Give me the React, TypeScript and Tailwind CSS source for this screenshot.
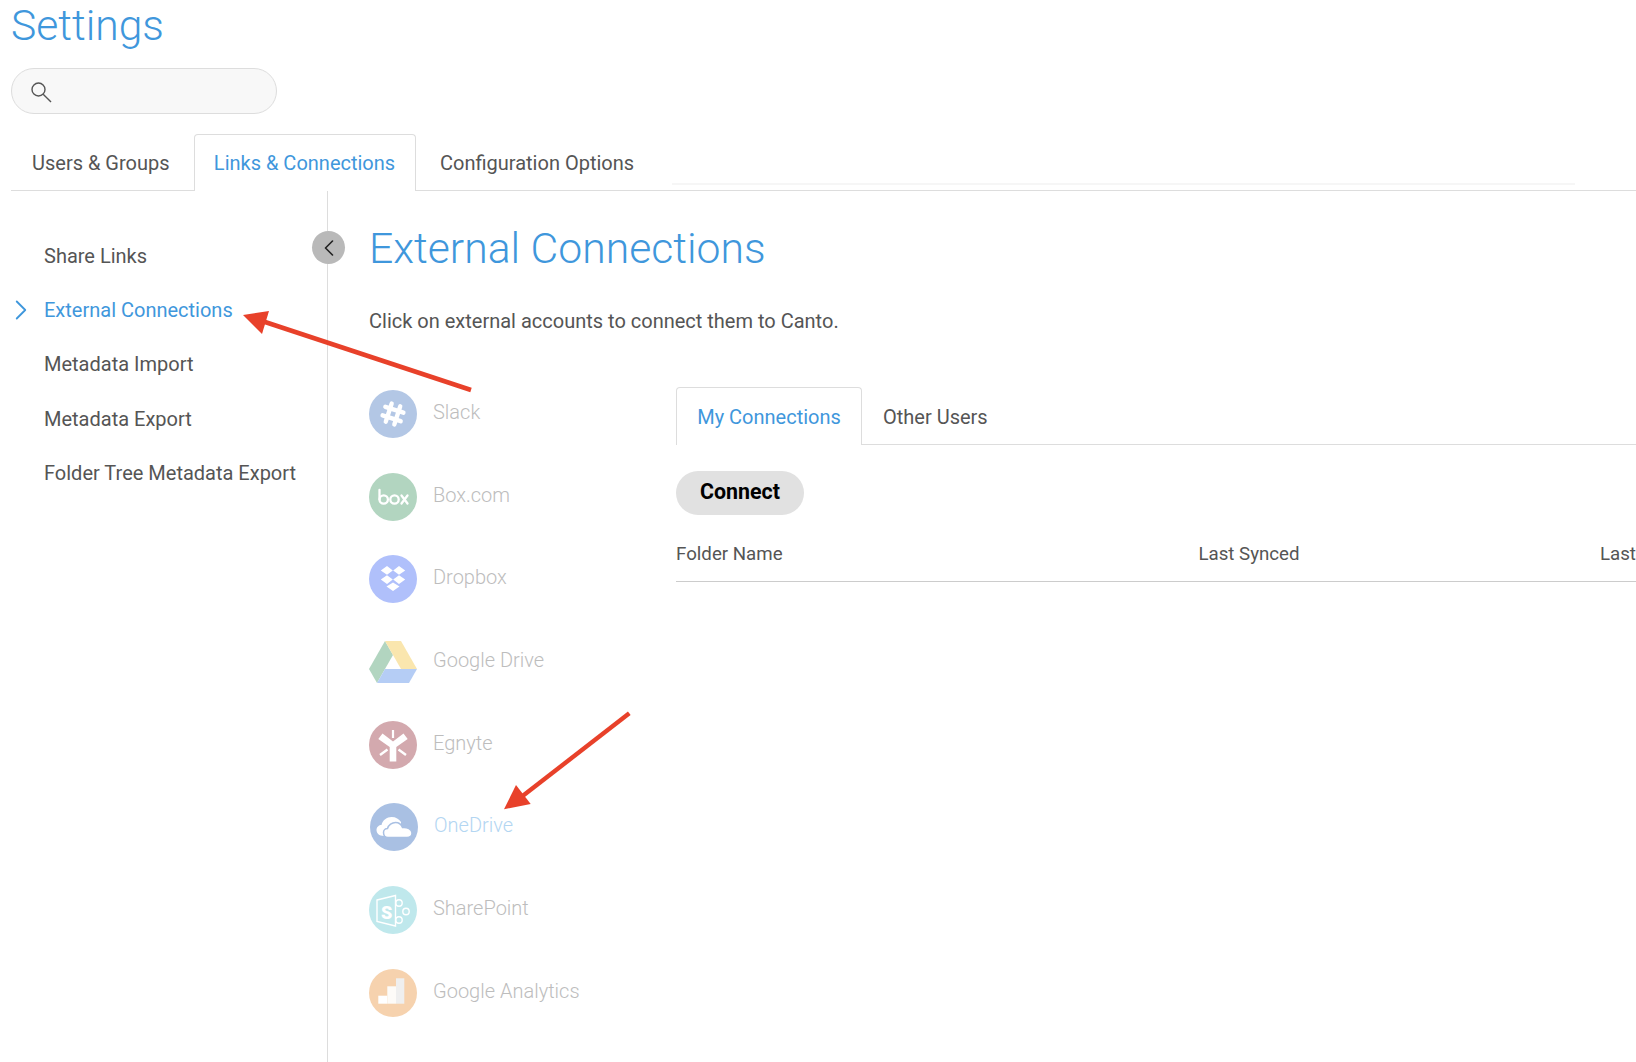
import { ChevronLeft, ChevronRight } from "lucide-react";

const sideLinks = [
  { label: "Share Links" },
  { label: "External Connections", active: true },
  { label: "Metadata Import" },
  { label: "Metadata Export" },
  { label: "Folder Tree Metadata Export" },
];

function SlackIcon() {
  return (
    <svg viewBox="0 0 48 48" className="size-12">
      <circle cx="24" cy="24" r="24" fill="#b3c7e5" />
      <g stroke="#fff" strokeWidth="4.4" strokeLinecap="round" fill="none" transform="rotate(18 24 24)">
        <path d="M19.5 14.5 V33.5" />
        <path d="M28.5 14.5 V33.5" />
        <path d="M14.5 19.5 H33.5" />
        <path d="M14.5 28.5 H33.5" />
      </g>
    </svg>
  );
}

function BoxIcon() {
  return (
    <svg viewBox="0 0 48 48" className="size-12">
      <circle cx="24" cy="24" r="24" fill="#b2d5c0" />
      <g stroke="#fff" strokeWidth="2.3" fill="none" strokeLinecap="round">
        <path d="M10.5 17 V26.5" />
        <circle cx="14.7" cy="26.5" r="4.2" />
        <circle cx="25.5" cy="26.5" r="4.2" />
        <path d="M32.5 22.5 L38.5 30.5 M38.5 22.5 L32.5 30.5" />
      </g>
    </svg>
  );
}

function DropboxIcon() {
  return (
    <svg viewBox="0 0 48 48" className="size-12">
      <circle cx="24" cy="24" r="24" fill="#b0c0fb" />
      <path
        fill="#fff"
        d="M18 11 L23.8 15.4 L18 19.8 L11.8 15.4 Z M30 11 L36.2 15.4 L30 19.8 L24.2 15.4 Z M18 20.2 L23.8 24.6 L18 29 L11.8 24.6 Z M30 20.2 L36.2 24.6 L30 29 L24.2 24.6 Z M24 27.5 L30.5 31.5 L24 36 L17.5 31.5 Z"
      />
    </svg>
  );
}

function DriveIcon() {
  return (
    <svg viewBox="0 0 48 42" className="h-[42px] w-12">
      <path fill="#b2d5c0" d="M16 0 L0 28 L8 42 L24 14 Z" />
      <path fill="#fae6ae" d="M16 0 L32 0 L48 28 L32 28 Z" />
      <path fill="#b5cdf5" d="M16 28 L48 28 L40 42 L8 42 Z" />
    </svg>
  );
}

function EgnyteIcon() {
  return (
    <svg viewBox="0 0 48 48" className="size-12">
      <circle cx="24" cy="24" r="24" fill="#d3a9ae" />
      <path d="M24 9 V17" stroke="#fff" strokeWidth="2.2" />
      <path d="M11 34 L18.5 28.5 M37 34 L29.5 28.5" stroke="#fff" strokeWidth="2.4" />
      <path fill="#fff" d="M9.3 18 L13.5 12.5 L24 20.5 L34.5 12.5 L38.7 18 L27.3 26 V40.5 H20.7 V26 Z" />
    </svg>
  );
}

function OneDriveIcon() {
  return (
    <svg viewBox="0 0 48 48" className="size-12">
      <circle cx="24" cy="24" r="24" fill="#a9c0e3" />
      <path
        fill="#fff"
        d="M14 33 C9 33 6.5 30 6.5 27 C6.5 24 9 22 11.5 22 C12.5 17 17 14 21.5 14 C26 14 29 16 31 19 L31 26 L14 33 Z"
      />
      <path
        fill="#fff"
        stroke="#a9c0e3"
        strokeWidth="1.5"
        d="M18 34.5 C15 34.5 13.5 32 13.5 29.5 C13.5 27 15.5 25.5 17.5 25.5 C18.5 22 22 19.5 25.5 19.5 C29 19.5 31.5 22 32.5 24.5 C37 24 42 26 42 30 C42 33 39.5 34.5 37 34.5 Z"
      />
    </svg>
  );
}

function SharePointIcon() {
  return (
    <svg viewBox="0 0 48 48" className="size-12">
      <circle cx="24" cy="24" r="24" fill="#bfe8ec" />
      <g fill="none" stroke="#fff" strokeWidth="1.4">
        <circle cx="30" cy="17" r="3.2" />
        <circle cx="37" cy="25.5" r="3.2" />
        <circle cx="30" cy="34" r="3.2" />
        <path d="M8 14 L26.5 9.5 V40 L8 35.5 Z" />
      </g>
      <text x="12" y="33" fill="#fff" fontSize="18" fontWeight="900" fontFamily="Roboto, sans-serif">
        S
      </text>
    </svg>
  );
}

function AnalyticsIcon() {
  return (
    <svg viewBox="0 0 48 48" className="size-12">
      <circle cx="24" cy="24" r="24" fill="#f6d2ae" />
      <rect x="9.3" y="26.7" width="9" height="8" fill="#fff" />
      <rect x="18.3" y="17.3" width="8.7" height="17.4" fill="#fdfbf8" />
      <rect x="27" y="9.3" width="8.3" height="25.4" fill="#efefef" />
    </svg>
  );
}

const services = [
  { name: "Slack", icon: <SlackIcon /> },
  { name: "Box.com", icon: <BoxIcon /> },
  { name: "Dropbox", icon: <DropboxIcon /> },
  { name: "Google Drive", icon: <DriveIcon /> },
  { name: "Egnyte", icon: <EgnyteIcon /> },
  { name: "OneDrive", icon: <OneDriveIcon />, active: true },
  { name: "SharePoint", icon: <SharePointIcon /> },
  { name: "Google Analytics", icon: <AnalyticsIcon /> },
];

export default function App() {
  return (
    <div className="relative h-[1062px] w-[1636px] overflow-hidden bg-white font-['Roboto',sans-serif] text-[#555]">
      <h1 className="pl-[11px] pt-[2px] text-[42.6px] font-light leading-[47px] text-[#3f97dc]">
        Settings
      </h1>

      <div className="ml-[11px] mt-[19px] flex h-[46px] w-[266px] items-center rounded-full border border-[#ddd] bg-[#f8f8f8] pl-[18px] pt-[1px]">
        <svg viewBox="0 0 22 22" className="size-[22px]" fill="none" stroke="#555" strokeWidth="1.4">
          <circle cx="8.5" cy="8.5" r="6.5" />
          <path d="M13.2 13.2 L21 21" />
        </svg>
      </div>

      {/* top tabs */}
      <div className="ml-[11px] mt-[20px] flex h-[57px] items-end border-b border-[#ddd]">
        <div className="flex h-[56px] w-[183px] items-center pl-[21px] pt-[1px] text-[20px]">Users &amp; Groups</div>
        <div className="-mb-px flex h-[57px] w-[222px] items-center justify-center rounded-t-[4px] border border-b-0 border-[#ddd] bg-white pr-[1px] text-[20px] text-[#3f97dc]">
          Links &amp; Connections
        </div>
        <div className="flex h-[56px] w-[256px] items-center pl-[24px] pt-[1px] text-[20px]">Configuration Options</div>
        <div className="mb-[5px] h-[2px] w-[903px] bg-[#f6f6f6]" />
      </div>

      <div className="flex">
        {/* sidebar */}
        <aside className="relative h-[871px] w-[328px] shrink-0 border-r border-[#ddd] pt-[38px]">
          {sideLinks.map((link) => (
            <div
              key={link.label}
              className={`relative flex h-[54.2px] items-center pl-[44px] text-[20px] ${link.active ? "text-[#3f97dc]" : ""}`}
            >
              {link.active && (
                <ChevronRight size={34} strokeWidth={1.3} className="absolute left-[4px] text-[#3f97dc]" />
              )}
              {link.label}
            </div>
          ))}
          <div className="absolute right-[-18px] top-[40px] flex size-[33px] items-center justify-center rounded-full bg-[#b9b9b9]">
            <ChevronLeft size={28} strokeWidth={1.4} className="text-[#222]" />
          </div>
        </aside>

        <main className="min-w-0 flex-1 pl-[41px]">
          <h2 className="pt-[30px] text-[42.7px] font-light leading-[54px] text-[#3f97dc]">External Connections</h2>
          <p className="mt-[32px] text-[20px] leading-[28px]">
            Click on external accounts to connect them to Canto.
          </p>

          <div className="mt-[52px] flex">
            {/* services */}
            <ul className="-mt-[14.5px] w-[307px] shrink-0">
              {services.map((s) => (
                <li key={s.name} className="flex h-[82.7px] items-center gap-[16px]">
                  <span className={`flex w-12 items-center justify-center ${s.active ? "ml-[1px]" : ""}`}>{s.icon}</span>
                  <span
                    className={`-mt-[4px] text-[20px] font-light ${s.active ? "text-[#b3d6f2]" : "text-[#bdbdbd]"}`}
                  >
                    {s.name}
                  </span>
                </li>
              ))}
            </ul>

            {/* connections */}
            <section className="min-w-0 flex-1">
              <div className="flex h-[58px] items-end border-b border-[#ddd]">
                <div className="-mb-px flex h-[58px] w-[186px] items-center justify-center rounded-t-[4px] border border-b-0 border-[#ddd] bg-white text-[20px] text-[#3f97dc]">
                  My Connections
                </div>
                <div className="flex h-[57px] items-center pl-[21px] pt-[2px] text-[20px]">Other Users</div>
              </div>
              <button className="mt-[26px] flex h-[44px] w-[128px] items-center justify-center rounded-full bg-[#e1e1e1] pb-[1px] text-[21.4px] font-bold text-black">
                Connect
              </button>
              <div className="mt-[22px] flex h-[45px] items-center border-b border-[#ccc] pb-[10px] text-[18.7px]">
                <span className="w-[523px]">Folder Name</span>
                <span className="w-[402px]">Last Synced</span>
                <span>Last</span>
              </div>
            </section>
          </div>
        </main>
      </div>

      {/* annotation arrows */}
      <svg className="pointer-events-none absolute inset-0" width="1636" height="1062">
        <path d="M471 390 L262 321" stroke="#e8412a" strokeWidth="4.6" />
        <path d="M243 315 L269 311 L262 334 Z" fill="#e8412a" />
        <path d="M629.3 713.3 L520 798" stroke="#e8412a" strokeWidth="4.4" />
        <path d="M504 809.3 L516 785 L530.7 804 Z" fill="#e8412a" />
      </svg>
    </div>
  );
}
